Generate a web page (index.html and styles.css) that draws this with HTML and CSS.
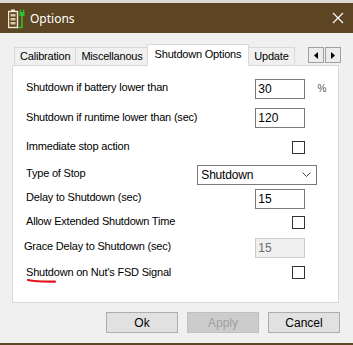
FILE: index.html
```html
<!DOCTYPE html>
<html lang="en">
<head>
    <meta charset="UTF-8">
    <title>Options</title>
    <link rel="stylesheet" href="styles.css">
</head>
<body>
    <div class="strip"></div>
    <div class="titlebar">
        <svg class="app-icon" width="18" height="20" viewBox="0 0 18 20">
            <rect x="3" y="0.5" width="4" height="2" fill="#f3ead6"/>
            <rect x="0.5" y="2.5" width="9" height="16" fill="none" stroke="#f3ead6" stroke-width="1.4"/>
            <rect x="2.5" y="5" width="5" height="2.5" fill="#d8c9a6"/>
            <rect x="2.5" y="9" width="5" height="2.5" fill="#d8c9a6"/>
            <rect x="2.5" y="13" width="5" height="2.5" fill="#d8c9a6"/>
            <path d="M10 18.5 H14 V6" fill="none" stroke="#2fbf2f" stroke-width="1.6"/>
            <rect x="11.5" y="3" width="5" height="4" fill="#2fbf2f"/>
            <rect x="12" y="0.5" width="1.2" height="3" fill="#2fbf2f"/>
            <rect x="15" y="0.5" width="1.2" height="3" fill="#2fbf2f"/>
        </svg>
        <span class="title">Options</span>
        <svg class="close" width="12" height="12" viewBox="0 0 12 12">
            <path d="M1 1 L11 11 M11 1 L1 11" stroke="#ffffff" stroke-width="1.1"/>
        </svg>
    </div>

    <div class="dialog">
        <div class="tabbar">
            <div class="tabs">
                <div class="tab">Calibration</div>
                <div class="tab">Miscellanous</div>
                <div class="tab active">Shutdown Options</div>
                <div class="tab">Update</div>
            </div>
            <div class="scroller">
                <span class="arrow">
                    <svg width="4" height="7" viewBox="0 0 4 7"><path d="M4 0 V7 L0 3.5 Z" fill="#000"/></svg>
                </span>
                <span class="arrow">
                    <svg width="4" height="7" viewBox="0 0 4 7"><path d="M0 0 V7 L4 3.5 Z" fill="#000"/></svg>
                </span>
            </div>
        </div>

        <div class="panel">
            <label class="lbl">Shutdown if battery lower than</label>
            <div class="ctl with-unit">
                <input class="field" type="text" value="30">
                <span class="unit">%</span>
            </div>

            <label class="lbl">Shutdown if runtime lower than (sec)</label>
            <div class="ctl"><input class="field" type="text" value="120"></div>

            <label class="lbl">Immediate stop action</label>
            <div class="ctl"><span class="check"></span></div>

            <label class="lbl">Type of Stop</label>
            <div class="ctl combo-cell">
                <div class="combo">
                    <span>Shutdown</span>
                    <svg width="9" height="5" viewBox="0 0 9 5"><path d="M0.5 0.5 L4.5 4.5 L8.5 0.5" fill="none" stroke="#444" stroke-width="1"/></svg>
                </div>
            </div>

            <label class="lbl">Delay to Shutdown (sec)</label>
            <div class="ctl"><input class="field" type="text" value="15"></div>

            <label class="lbl">Allow Extended Shutdown Time</label>
            <div class="ctl"><span class="check"></span></div>

            <label class="lbl shift-left">Grace Delay to Shutdown (sec)</label>
            <div class="ctl"><input class="field" type="text" value="15" disabled></div>

            <label class="lbl marked">Shutdown on Nut's FSD Signal
                <svg class="scribble" width="30" height="6" viewBox="0 0 30 6">
                    <path d="M1 2 C8 3.5, 18 3.8, 28 3.6" fill="none" stroke="#e0141e" stroke-width="2.2" stroke-linecap="round"/>
                </svg>
            </label>
            <div class="ctl"><span class="check"></span></div>
        </div>

        <div class="buttons">
            <button class="btn">Ok</button>
            <button class="btn" disabled>Apply</button>
            <button class="btn">Cancel</button>
        </div>
    </div>
    <div class="bottom-edge"></div>
</body>
</html>
```

FILE: styles.css
```css
body {
    margin: 0;
    padding: 0;
    width: 353px;
    background: #f0f0f0;
    font-family: "Liberation Sans", Arial, sans-serif;
    font-size: 11px;
    color: #000;
}
.strip {
    height: 3px;
    background: #dcd9d3;
}
.titlebar {
    height: 30px;
    background: #5d4523;
    display: flex;
    align-items: center;
    padding-left: 8px;
    padding-right: 9px;
}
.app-icon {
    margin-top: 1px;
}
.title {
    font-family: "Noto Sans", "Open Sans", sans-serif;
    font-size: 12px;
    color: #fff;
    margin-left: 4px;
    flex: 1;
}
.dialog {
    height: 310px;
}
.tabbar {
    display: flex;
    align-items: flex-end;
    padding-top: 12px;
    padding-left: 14px;
    height: 20px;
}
.tabs {
    display: flex;
    align-items: flex-end;
    flex: 1;
}
.tab {
    height: 17px;
    line-height: 17px;
    padding: 0 5px;
    border: 1px solid #d9d9d9;
    border-bottom: none;
    margin-right: -1px;
    letter-spacing: -0.2px;
    background: #f0f0f0;
    white-space: nowrap;
}
.tab.active {
    height: 21px;
    line-height: 18px;
    padding: 0 7px;
    background: #fff;
    margin-bottom: -1px;
    margin-left: -1px;
    margin-right: -1px;
    position: relative;
    z-index: 1;
}
.scroller {
    display: flex;
    gap: 1px;
    align-self: flex-start;
    margin-top: 2px;
    margin-right: 12px;
}
.arrow {
    width: 14px;
    height: 14px;
    border: 1px solid #a0a0a0;
    background: #ececec;
    display: flex;
    align-items: center;
    justify-content: center;
}
.panel {
    margin-left: 12px;
    width: 325px;
    height: 236px;
    background: #fff;
    border: 1px solid #d9d9d9;
    box-sizing: content-box;
    padding-top: 0;
    display: grid;
    grid-template-columns: 1fr auto;
    grid-template-rows: 8px 29px 30px 29px 25px 23px 25px 25px 24px;
}
.panel::before {
    content: "";
    grid-column: 1 / 3;
}
.lbl {
    padding-left: 13px;
    align-self: center;
    letter-spacing: -0.2px;
    margin-top: -3px;
    white-space: nowrap;
}
.lbl.shift-left {
    padding-left: 11px;
}
.lbl.marked {
    position: relative;
    margin-top: 0;
}
.scribble {
    position: absolute;
    left: 14px;
    top: 12px;
}
.ctl {
    align-self: center;
    justify-self: end;
    margin-right: 33px;
    display: flex;
    align-items: center;
}
.ctl.with-unit {
    margin-right: 0;
}
.unit {
    width: 33px;
    text-align: center;
    font-size: 10px;
    color: #6b4f4f;
}
.ctl.combo-cell {
    margin-right: 21px;
}
.field {
    width: 50px;
    height: 20px;
    box-sizing: border-box;
    border: 1px solid #7a7a7a;
    padding: 0 2px;
    font-family: "Liberation Sans", Arial, sans-serif;
    font-size: 12px;
    color: #000;
    background: #fff;
    margin: 0;
}
.field:disabled {
    background: #f0f0f0;
    border-color: #cccccc;
    color: #6d6d6d;
}
.check {
    width: 13px;
    height: 13px;
    box-sizing: border-box;
    border: 1px solid #333;
    background: #fff;
    display: block;
}
.combo {
    width: 120px;
    height: 20px;
    box-sizing: border-box;
    border: 1px solid #7a7a7a;
    display: flex;
    align-items: center;
    justify-content: space-between;
    padding: 0 5px 0 3px;
    font-size: 12px;
    letter-spacing: -0.2px;
}
.buttons {
    display: flex;
    justify-content: flex-end;
    gap: 9px;
    padding-top: 9px;
    padding-right: 13px;
}
.btn {
    width: 72px;
    height: 21px;
    border: 1px solid #adadad;
    background: #e1e1e1;
    font-family: "Liberation Sans", Arial, sans-serif;
    font-size: 12px;
    color: #000;
    padding: 0;
}
.btn:disabled {
    background: #cccccc;
    border-color: #bfbfbf;
    color: #a0a0a0;
}
.bottom-edge {
    height: 2px;
    background: #5d4523;
}
```
